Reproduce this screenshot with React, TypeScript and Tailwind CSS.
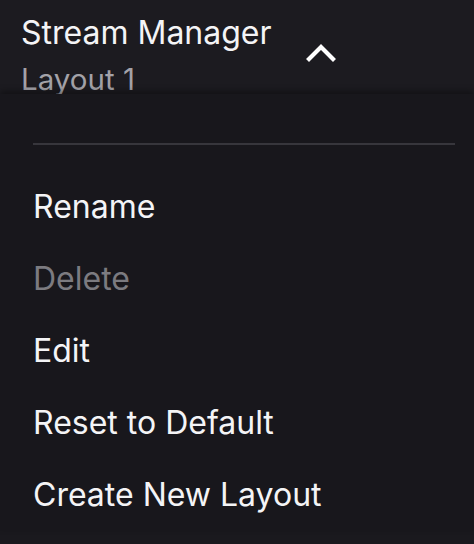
import { useState } from 'react'

const items = [
  { name: 'Rename', disabled: false },
  { name: 'Delete', disabled: true },
  { name: 'Edit', disabled: false },
  { name: 'Reset to Default', disabled: false },
  { name: 'Create New Layout', disabled: false },
]

const App = () => {
  const [open, setOpen] = useState(true)

  return (
    <div className="w-[474px] h-[544px] bg-[#1a191e] overflow-hidden font-['Inter',sans-serif]">
      {/* Header */}
      <button
        onClick={() => setOpen(!open)}
        className="w-full h-[94px] overflow-hidden flex items-start bg-[#1c1b20] text-left pl-[21px] pt-[13px]"
      >
        <div className="flex flex-col">
          <span className="text-[32px] leading-[40px] text-[#f4f4f6]">Stream Manager</span>
          <span className="text-[29.5px] leading-[40px] mt-[6px] text-[#a3a2a8]">Layout 1</span>
        </div>
        <svg className="ml-[33px] mt-[29px] w-[32px] h-[22px]" viewBox="0 0 32 22" fill="none">
          <path d="M4 17 L16 5 L28 17" stroke="#ffffff" strokeWidth={4.2} strokeLinecap="square" />
        </svg>
      </button>

      {/* Dropdown */}
      {open && (
        <div className="relative bg-[#18171c] shadow-[0_-3px_6px_rgba(0,0,0,0.35)] pt-[49px]">
          <div className="mx-[33px] mr-[19px] h-[2px] bg-[#37363c]" />
          <ul className="pt-[26px] pl-[33px]">
            {items.map((item) => (
              <li
                key={item.name}
                className={`text-[32px] leading-[72px] ${item.disabled ? 'text-[#7c7b80]' : 'text-[#f4f4f6]'}`}
              >
                {item.name}
              </li>
            ))}
          </ul>
        </div>
      )}
    </div>
  )
}

export default App
